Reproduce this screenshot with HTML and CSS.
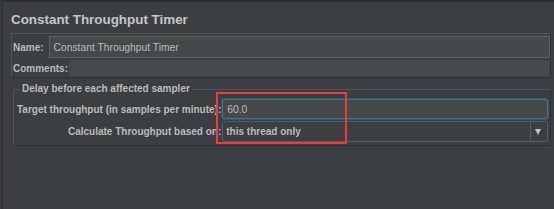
FILE: index.html
```html
<!DOCTYPE html>
<html lang="en">

<head>
    <meta charset="UTF-8">
    <meta name="viewport" content="width=device-width, initial-scale=1.0">
    <title>Constant Throughput Timer</title>
    <link rel="stylesheet" href="styles.css">
</head>

<body>
    <div class="frame">
        <h1 class="title">Constant Throughput Timer</h1>
        <div class="namePanel">
            <div class="row">
                <label class="lbl nameLbl">Name:</label>
                <div class="field nameField">Constant Throughput Timer</div>
            </div>
            <div class="row">
                <label class="lbl">Comments:</label>
                <div class="field commentField"></div>
            </div>
        </div>
        <fieldset class="group">
            <legend>Delay before each affected sampler</legend>
            <div class="grid">
                <label class="lbl">Target throughput (in samples per minute):</label>
                <div class="field focus">60.0</div>
                <label class="lbl">Calculate Throughput based on:</label>
                <div class="combo">
                    <span class="comboText">this thread only</span>
                    <span class="arrow"></span>
                </div>
            </div>
        </fieldset>
        <div class="mark"></div>
    </div>
</body>

</html>
```

FILE: styles.css
```css
* {
    margin: 0;
    padding: 0;
    box-sizing: border-box;
}

body {
    width: 554px;
    height: 209px;
    overflow: hidden;
    background-color: #37393b;
    font-family: "Liberation Sans", Arial, sans-serif;
    color: #bbbbbb;
}

.frame {
    position: relative;
    margin-left: 2px;
    height: 209px;
    border-top: 2px solid #2b2d2f;
    border-left: 1px solid #2b2d2f;
    background-color: #3c3f41;
    padding-right: 3px;
}

.title {
    font-size: 13.4px;
    font-weight: bold;
    line-height: 16px;
    color: #c6c6c6;
    padding: 10px 0 0 8px;
    margin-bottom: 5px;
}

.namePanel {
    margin-left: 8px;
    border: 1px solid #515456;
    border-right-color: #2f3133;
    border-bottom-color: #2f3133;
    padding: 2px 0 0 1px;
}

.row {
    display: flex;
    align-items: center;
}

.row + .row {
    margin-top: 2px;
}

.lbl {
    font-size: 10px;
    font-weight: bold;
    white-space: nowrap;
}

.nameLbl {
    margin-right: 5px;
}

.field {
    flex: 1;
    background-color: #45494a;
    font-size: 10.3px;
    display: flex;
    align-items: center;
    padding-left: 4px;
}

.nameField {
    height: 22px;
    border: 1px solid #5e6162;
}

.commentField {
    height: 17px;
    margin-left: 1px;
    border: 1px solid #424547;
    background-color: #474a4c;
}

.group {
    margin: 5px 0 0 10px;
    border: 1px solid #515456;
    border-right-color: #2f3133;
    border-bottom-color: #2f3133;
    padding: 4px 2px 4px 3px;
    min-width: 0;
}

.group legend {
    font-size: 10px;
    font-weight: bold;
    line-height: 12px;
    margin-left: 3px;
    padding: 0 2px;
}

.grid {
    display: grid;
    grid-template-columns: auto 1fr;
    grid-auto-rows: 20px;
    row-gap: 2px;
    column-gap: 1px;
    align-items: center;
}

.grid .lbl {
    justify-self: end;
}

.focus {
    height: 20px;
    border: 1px solid #4a6f97;
    border-radius: 3px;
    box-shadow: 0 0 0 1px #3e5266;
}

.combo {
    height: 21px;
    display: flex;
    align-items: center;
    border: 1px solid #5a5d5f;
    border-radius: 3px;
    background-color: #3c3f41;
}

.comboText {
    flex: 1;
    font-size: 10px;
    font-weight: bold;
    padding-left: 3px;
}

.arrow {
    width: 17px;
    height: 100%;
    border-left: 1px solid #5a5d5f;
    position: relative;
}

.arrow::after {
    content: "";
    position: absolute;
    left: 4px;
    top: 7px;
    border-left: 3.5px solid transparent;
    border-right: 3.5px solid transparent;
    border-top: 6px solid #c4c4c4;
}

.mark {
    position: absolute;
    left: 213px;
    top: 90px;
    width: 131px;
    height: 52px;
    border: 2px solid #ee3a3a;
}
```
